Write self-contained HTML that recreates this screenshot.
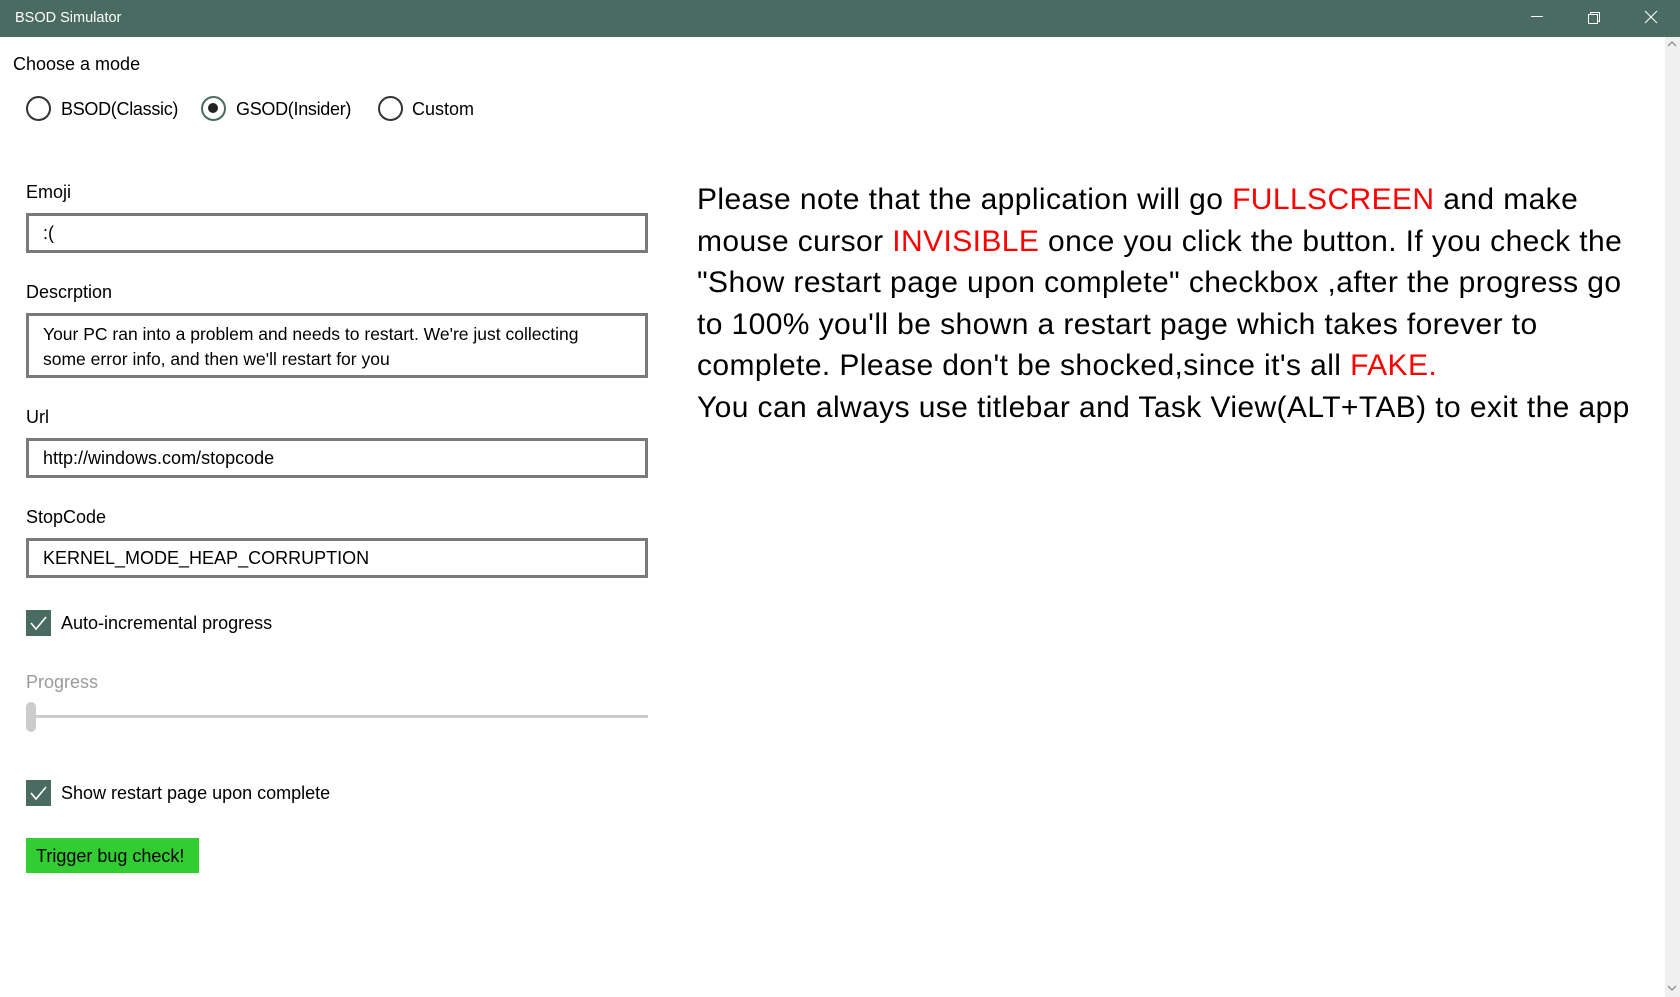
<!DOCTYPE html>
<html><head><style>
*{margin:0;padding:0;box-sizing:border-box}
body{width:1680px;height:997px;background:#fff;font-family:"Liberation Sans",sans-serif;color:#000;position:relative;overflow:hidden}
.a{position:absolute;white-space:nowrap}
.tb{left:0;top:0;width:1680px;height:37px;background:#4a6b61}
.lbl{font-size:18px}
.radio{width:25px;height:25px;border:2.5px solid #333;border-radius:50%}
.box{left:26px;width:622px;border:3px solid #7a7a7a;font-size:18px;padding-left:14px}
.cb{width:25px;height:26px;background:#4a6b61}
.r{color:#f00}
.rt{left:697px;font-size:30px;letter-spacing:0.4px;line-height:41.6px;top:179px}
</style></head><body>
<div class="a tb"></div>
<div class="a" style="left:15px;top:10px;font-size:14.5px;color:#fff">BSOD Simulator</div>
<svg class="a" style="left:1530px;top:10px" width="140" height="20">
<line x1="1" y1="6.5" x2="13" y2="6.5" stroke="#fff" stroke-width="1"/>
<rect x="58.5" y="4.5" width="9" height="9" fill="none" stroke="#fff"/>
<path d="M60.5 4.5V2.5H69.5V11.5H67.5" fill="none" stroke="#fff"/>
<path d="M115 1L127 13M127 1L115 13" stroke="#fff"/>
</svg>
<div class="a" style="left:1665px;top:37px;width:15px;height:960px;background:#f0f0f0"></div>
<svg class="a" style="left:1666px;top:40px" width="12" height="8"><path d="M2 6L6 2L10 6" fill="none" stroke="#777"/></svg>
<svg class="a" style="left:1666px;top:984px" width="12" height="8"><path d="M2 2L6 6L10 2" fill="none" stroke="#777"/></svg>

<div class="a lbl" style="left:13px;top:54px">Choose a mode</div>
<div class="a radio" style="left:26px;top:96px"></div>
<div class="a lbl" style="left:61px;top:99px;letter-spacing:-0.3px">BSOD(Classic)</div>
<div class="a radio" style="left:201px;top:96px;border-color:#4a6b61"><div style="position:absolute;left:5px;top:5px;width:10px;height:10px;border-radius:50%;background:#222"></div></div>
<div class="a lbl" style="left:236px;top:99px;letter-spacing:-0.3px">GSOD(Insider)</div>
<div class="a radio" style="left:378px;top:96px"></div>
<div class="a lbl" style="left:412px;top:99px">Custom</div>

<div class="a lbl" style="left:26px;top:182px">Emoji</div>
<div class="a box" style="top:213px;height:40px;line-height:34px">:(</div>
<div class="a lbl" style="left:26px;top:282px">Descrption</div>
<div class="a box" style="top:313px;height:65px;padding-top:6px;line-height:25px;font-size:17.5px">Your PC ran into a problem and needs to restart. We're just collecting<br>some error info, and then we'll restart for you</div>
<div class="a lbl" style="left:26px;top:407px">Url</div>
<div class="a box" style="top:438px;height:40px;line-height:35px">http://windows.com/stopcode</div>
<div class="a lbl" style="left:26px;top:507px">StopCode</div>
<div class="a box" style="top:538px;height:40px;line-height:35px">KERNEL_MODE_HEAP_CORRUPTION</div>

<div class="a cb" style="left:26px;top:610px"><svg width="25" height="26"><path d="M5 13L10 19L20 7" fill="none" stroke="#fff" stroke-width="1.6"/></svg></div>
<div class="a lbl" style="left:61px;top:613px">Auto-incremental progress</div>
<div class="a lbl" style="left:26px;top:672px;color:#9a9a9a">Progress</div>
<div class="a" style="left:30px;top:715px;width:618px;height:3px;background:#ccc"></div>
<div class="a" style="left:26px;top:702px;width:10px;height:30px;border-radius:5px;background:#ccc"></div>

<div class="a cb" style="left:26px;top:780px"><svg width="25" height="26"><path d="M5 13L10 19L20 7" fill="none" stroke="#fff" stroke-width="1.6"/></svg></div>
<div class="a lbl" style="left:61px;top:783px">Show restart page upon complete</div>
<div class="a" style="left:26px;top:838px;width:173px;height:35px;background:#32cd32;font-size:18px;line-height:36px;padding-left:10px">Trigger bug check!</div>

<div class="a rt">Please note that the application will go <span class="r">FULLSCREEN</span> and make<br>mouse cursor <span class="r">INVISIBLE</span> once you click the button. If you check the<br>"Show restart page upon complete" checkbox ,after the progress go<br>to 100% you'll be shown a restart page which takes forever to<br>complete. Please don't be shocked,since it's all <span class="r">FAKE.</span><br>You can always use titlebar and Task View(ALT+TAB) to exit the app</div>
</body></html>
